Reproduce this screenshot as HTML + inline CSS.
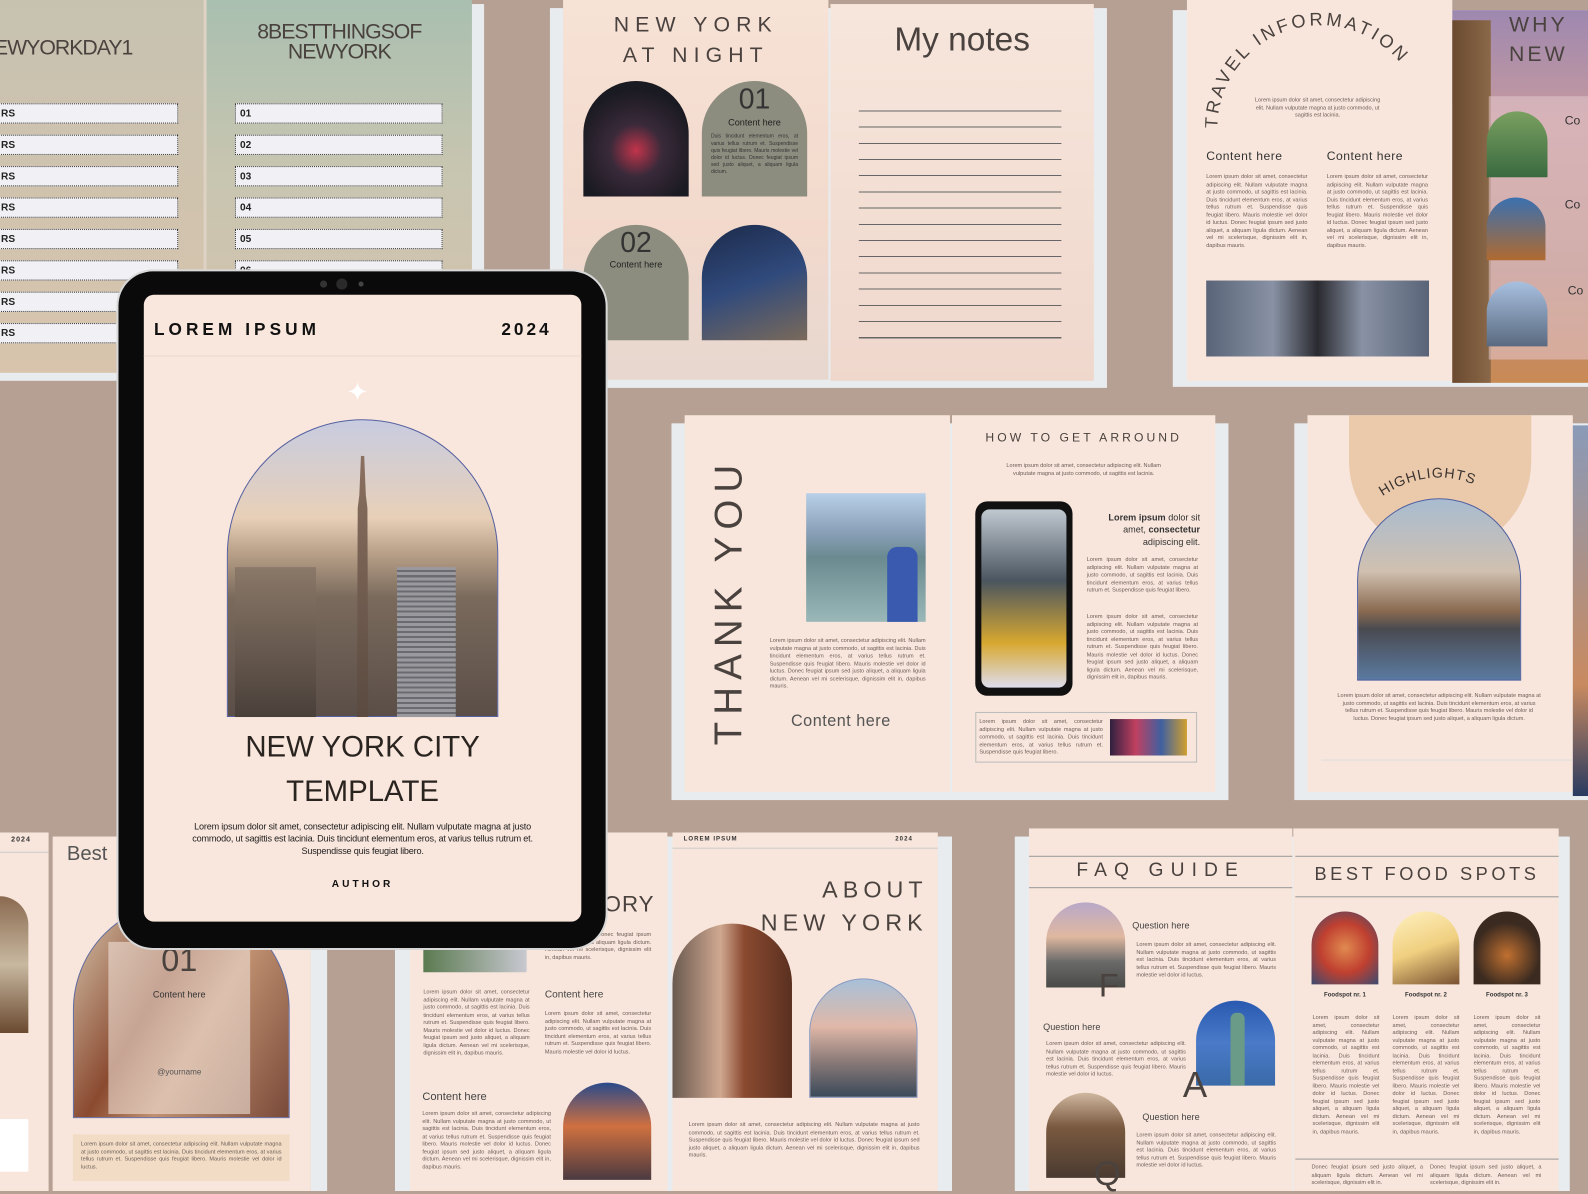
<!DOCTYPE html>
<html><head><meta charset="utf-8">
<style>
*{margin:0;padding:0;box-sizing:border-box}
html,body{width:1588px;height:1191px;overflow:hidden;background:#b5a093}
#w{position:absolute;left:0;top:0;width:1568px;height:1176px;transform:scale(1.01276);transform-origin:0 0;font-family:"Liberation Sans",sans-serif;color:#333}
.a{position:absolute}
.pg{position:absolute;background:#f8e6dc}
.sh{position:absolute;background:#e9ecef}
.arch{position:absolute;border-radius:999px 999px 0 0;overflow:hidden}
.t{position:absolute;font-size:5.5px;line-height:7.5px;color:#6a5c55;text-align:justify}
.h{position:absolute;font-weight:300;color:#4a423e;letter-spacing:4px;white-space:nowrap}
.box{position:absolute;height:20px;background:#f1f0f4;border:1.5px dotted #333;font:bold 10px "Liberation Sans";padding:4px 4px;color:#222}
</style></head><body><div id="w">

<!-- TOP LEFT SPREAD -->
<div class="sh" style="left:0;top:4px;width:478px;height:372px"></div>
<div class="a" style="left:0;top:0;width:466px;height:368px;background:linear-gradient(180deg,#a9bfb0 0%,#c7c5b0 45%,#d6c3ad 100%)"></div>
<div class="a" style="left:0;top:0;width:202px;height:368px;background:linear-gradient(180deg,#c7c2b0,#d8c4ad)"></div>
<div class="a" style="left:201px;top:0;width:3px;height:368px;background:#ddd2c4"></div>
<div class="h" style="left:-6px;top:36px;font-size:21px;letter-spacing:-1px">EWYORKDAY1</div>
<div class="h" style="left:230px;top:22px;width:210px;text-align:center;font-size:21px;line-height:20px;letter-spacing:-1px">8BESTTHINGSOF<br>NEWYORK</div>
<div class="box" style="left:-4px;top:102px;width:180px">RS</div>
<div class="box" style="left:-4px;top:133px;width:180px">RS</div>
<div class="box" style="left:-4px;top:164px;width:180px">RS</div>
<div class="box" style="left:-4px;top:195px;width:180px">RS</div>
<div class="box" style="left:-4px;top:226px;width:180px">RS</div>
<div class="box" style="left:-4px;top:257px;width:180px">RS</div>
<div class="box" style="left:-4px;top:288px;width:180px">RS</div>
<div class="box" style="left:-4px;top:319px;width:180px">RS</div>
<div class="box" style="left:232px;top:102px;width:205px">01</div>
<div class="box" style="left:232px;top:133px;width:205px">02</div>
<div class="box" style="left:232px;top:164px;width:205px">03</div>
<div class="box" style="left:232px;top:195px;width:205px">04</div>
<div class="box" style="left:232px;top:226px;width:205px">05</div>
<div class="box" style="left:232px;top:257px;width:205px">06</div>

<!-- TOP MIDDLE SPREAD -->
<div class="sh" style="left:543px;top:8px;width:550px;height:375px"></div>
<div class="pg" style="left:556px;top:0;width:262px;height:375px;background:linear-gradient(180deg,#f7e2d6 0%,#f2d9cc 60%,#e7d7cf 100%)"></div>
<div class="pg" style="left:820px;top:4px;width:260px;height:372px;background:linear-gradient(180deg,#f7e6dc,#efd7cc)"></div>
<div class="h" style="left:556px;top:10px;width:262px;text-align:center;font-size:21px;line-height:30px;letter-spacing:6px">NEW YORK<br>AT NIGHT</div>
<div class="arch" style="left:576px;top:80px;width:104px;height:114px;background:radial-gradient(circle at 50% 60%,#c2344b 0,#3a2a3a 30%,#1a1a22 70%)"></div>
<div class="arch" style="left:693px;top:80px;width:104px;height:114px;background:#8c8d7f"></div>
<div class="h" style="left:693px;top:82px;width:104px;text-align:center;font-size:28px;letter-spacing:0;color:#333">01</div>
<div class="a" style="left:693px;top:116px;width:104px;text-align:center;font-size:9px;color:#222">Content here</div>
<div class="t" style="left:702px;top:132px;width:86px;color:#333;font-size:5px;line-height:7px">Duis tincidunt elementum eros, at varius tellus rutrum et. Suspendisse quis feugiat libero. Mauris molestie vel dolor id luctus. Donec feugiat ipsum sed justo aliquet, a aliquam ligula dictum.</div>
<div class="arch" style="left:576px;top:222px;width:104px;height:114px;background:#8c8d7f"></div>
<div class="h" style="left:576px;top:224px;width:104px;text-align:center;font-size:28px;letter-spacing:0;color:#333">02</div>
<div class="a" style="left:576px;top:256px;width:104px;text-align:center;font-size:9px;color:#222">Content here</div>
<div class="arch" style="left:693px;top:222px;width:104px;height:114px;background:linear-gradient(160deg,#1c2a4a,#304a7c 50%,#7a6a5a)"></div>
<div class="h" style="left:820px;top:20px;width:260px;text-align:center;font-size:33px;letter-spacing:0">My notes</div>
<div class="a" style="left:848px;top:94px;width:200px;height:250px;background:repeating-linear-gradient(180deg,transparent 0,transparent 15px,#666 15px,#666 16px)"></div>

<!-- TOP RIGHT SPREAD -->
<div class="sh" style="left:1158px;top:10px;width:420px;height:372px"></div>
<div class="pg" style="left:1172px;top:0;width:262px;height:376px"></div>
<div class="a" style="left:1434px;top:10px;width:140px;height:368px;background:linear-gradient(180deg,#9e88b0 0%,#c69a9e 30%,#b98d7e 70%,#c98a54 100%)"></div>
<div class="a" style="left:1434px;top:20px;width:38px;height:358px;background:linear-gradient(90deg,#6a4a30,#8a6848)"></div>
<div class="a" style="left:1470px;top:95px;width:98px;height:260px;background:rgba(230,200,205,.55)"></div>
<div class="arch" style="left:1468px;top:110px;width:60px;height:65px;background:linear-gradient(#7aa060,#3a6a40)"></div>
<div class="arch" style="left:1468px;top:195px;width:58px;height:62px;background:linear-gradient(#3a70b0,#b06a30)"></div>
<div class="arch" style="left:1468px;top:278px;width:60px;height:64px;background:linear-gradient(#a8c0e0,#5a6a80)"></div>
<div class="h" style="left:1490px;top:10px;font-size:21px;letter-spacing:3px;line-height:29px">WHY<br>NEW</div>
<div class="a" style="left:1545px;top:112px;font-size:12px;color:#333">Co</div>
<div class="a" style="left:1545px;top:195px;font-size:12px;color:#333">Co</div>
<div class="a" style="left:1548px;top:280px;font-size:12px;color:#333">Co</div>
<svg class="a" style="left:1190px;top:5px" width="230" height="130" viewBox="0 0 230 130"><defs><path id="arc" d="M12,122 A102,102 0 0 1 216,122"/></defs><text font-family="Liberation Sans" font-size="18" fill="#4a423e" letter-spacing="3"><textPath href="#arc">TRAVEL INFORMATION</textPath></text></svg>
<div class="t" style="left:1236px;top:96px;width:130px;text-align:center">Lorem ipsum dolor sit amet, consectetur adipiscing elit. Nullam vulputate magna at justo commodo, ut sagittis est lacinia.</div>
<div class="a" style="left:1191px;top:147px;font-size:12px;color:#333;letter-spacing:.5px">Content here</div>
<div class="a" style="left:1310px;top:147px;font-size:12px;color:#333;letter-spacing:.5px">Content here</div>
<div class="t" style="left:1191px;top:172px;width:100px">Lorem ipsum dolor sit amet, consectetur adipiscing elit. Nullam vulputate magna at justo commodo, ut sagittis est lacinia. Duis tincidunt elementum eros, at varius tellus rutrum et. Suspendisse quis feugiat libero. Mauris molestie vel dolor id luctus. Donec feugiat ipsum sed justo aliquet, a aliquam ligula dictum. Aenean vel mi scelerisque, dignissim elit in, dapibus mauris.</div>
<div class="t" style="left:1310px;top:172px;width:100px">Lorem ipsum dolor sit amet, consectetur adipiscing elit. Nullam vulputate magna at justo commodo, ut sagittis est lacinia. Duis tincidunt elementum eros, at varius tellus rutrum et. Suspendisse quis feugiat libero. Mauris molestie vel dolor id luctus. Donec feugiat ipsum sed justo aliquet, a aliquam ligula dictum. Aenean vel mi scelerisque, dignissim elit in, dapibus mauris.</div>
<div class="a" style="left:1191px;top:277px;width:220px;height:75px;background:linear-gradient(90deg,#5a6478,#8892a4 30%,#2a2a30 50%,#8892a4 70%,#5a6478)"></div>

<!-- MIDDLE SPREAD -->
<div class="sh" style="left:663px;top:418px;width:550px;height:372px"></div>
<div class="pg" style="left:676px;top:410px;width:262px;height:372px"></div>
<div class="pg" style="left:940px;top:410px;width:260px;height:372px"></div>
<div class="h" style="left:570px;top:572px;width:300px;text-align:center;font-size:38px;letter-spacing:7px;transform:rotate(-90deg);line-height:44px">THANK YOU</div>
<div class="a" style="left:796px;top:487px;width:118px;height:127px;background:linear-gradient(180deg,#b8d0e8 0,#8aa0b8 30%,#6a8a90 50%,#9ab8b8 100%)"></div>
<div class="a" style="left:876px;top:540px;width:30px;height:74px;background:#3a5ab0;border-radius:10px 10px 0 0"></div>
<div class="t" style="left:760px;top:630px;width:154px">Lorem ipsum dolor sit amet, consectetur adipiscing elit. Nullam vulputate magna at justo commodo, ut sagittis est lacinia. Duis tincidunt elementum eros, at varius tellus rutrum et. Suspendisse quis feugiat libero. Mauris molestie vel dolor id luctus. Donec feugiat ipsum sed justo aliquet, a aliquam ligula dictum. Aenean vel mi scelerisque, dignissim elit in, dapibus mauris.</div>
<div class="a" style="left:781px;top:704px;font-size:16px;color:#555;letter-spacing:.5px">Content here</div>
<div class="h" style="left:940px;top:425px;width:260px;text-align:center;font-size:12px;letter-spacing:3px">HOW TO GET ARROUND</div>
<div class="t" style="left:985px;top:457px;width:170px;text-align:center">Lorem ipsum dolor sit amet, consectetur adipiscing elit. Nullam vulputate magna at justo commodo, ut sagittis est lacinia.</div>
<div class="a" style="left:963px;top:495px;width:96px;height:192px;background:#111;border-radius:12px"></div>
<div class="a" style="left:969px;top:503px;width:84px;height:176px;border-radius:8px;background:linear-gradient(180deg,#c0c8d0,#4a5560 40%,#d8a830 75%,#dde 100%)"></div>
<div class="a" style="left:1070px;top:505px;width:115px;text-align:right;font-size:9px;line-height:12px;color:#333"><b>Lorem ipsum</b> dolor sit amet, <b>consectetur</b> adipiscing elit.</div>
<div class="t" style="left:1073px;top:550px;width:110px">Lorem ipsum dolor sit amet, consectetur adipiscing elit. Nullam vulputate magna at justo commodo, ut sagittis est lacinia. Duis tincidunt elementum eros, at varius tellus rutrum et. Suspendisse quis feugiat libero.</div>
<div class="t" style="left:1073px;top:606px;width:110px">Lorem ipsum dolor sit amet, consectetur adipiscing elit. Nullam vulputate magna at justo commodo, ut sagittis est lacinia. Duis tincidunt elementum eros, at varius tellus rutrum et. Suspendisse quis feugiat libero. Mauris molestie vel dolor id luctus. Donec feugiat ipsum sed justo aliquet, a aliquam ligula dictum. Aenean vel mi scelerisque, dignissim elit in, dapibus mauris.</div>
<div class="a" style="left:963px;top:703px;width:219px;height:50px;border:1px solid #bbb"></div>
<div class="t" style="left:967px;top:710px;width:122px">Lorem ipsum dolor sit amet, consectetur adipiscing elit. Nullam vulputate magna at justo commodo, ut sagittis est lacinia. Duis tincidunt elementum eros, at varius tellus rutrum et. Suspendisse quis feugiat libero.</div>
<div class="a" style="left:1096px;top:710px;width:76px;height:36px;background:linear-gradient(90deg,#302040,#c04060,#4060a0,#d0a030)"></div>

<!-- RIGHT MIDDLE -->
<div class="sh" style="left:1278px;top:418px;width:290px;height:372px"></div>
<div class="pg" style="left:1291px;top:410px;width:262px;height:372px"></div>
<div class="a" style="left:1553px;top:420px;width:15px;height:366px;background:linear-gradient(180deg,#8a9ab8,#c88a60 70%,#2a3a60)"></div>
<div class="a" style="left:1332px;top:410px;width:180px;height:135px;background:#ebc9ab;border-radius:0 0 90px 90px"></div>
<div class="arch" style="left:1340px;top:492px;width:162px;height:180px;border:1px solid #5060a0;background:linear-gradient(180deg,#a8bcd0 0,#d0c0b0 40%,#8a6a50 62%,#4a4a50 72%,#5a7aa0 100%)"></div>
<svg class="a" style="left:1360px;top:448px" width="120" height="50"><defs><path id="a2" d="M5,42 Q60,5 118,42"/></defs><text font-family="Liberation Sans" font-size="14" fill="#3a3330" letter-spacing="1"><textPath href="#a2">HIGHLIGHTS</textPath></text></svg>
<div class="t" style="left:1320px;top:684px;width:202px;text-align:center">Lorem ipsum dolor sit amet, consectetur adipiscing elit. Nullam vulputate magna at justo commodo, ut sagittis est lacinia. Duis tincidunt elementum eros, at varius tellus rutrum et. Suspendisse quis feugiat libero. Mauris molestie vel dolor id luctus. Donec feugiat ipsum sed justo aliquet, a aliquam ligula dictum.</div>
<div class="a" style="left:1305px;top:750px;width:248px;border-top:1px solid #ddd"></div>

<!-- BOTTOM LEFT -->
<div class="pg" style="left:0;top:822px;width:48px;height:354px"></div>
<div class="a" style="left:11px;top:826px;font:bold 7px 'Liberation Sans';letter-spacing:1px">2024</div>
<div class="a" style="left:0;top:841px;width:48px;border-top:1px solid #ccc"></div>
<div class="a" style="left:0;top:885px;width:28px;height:135px;background:linear-gradient(#8a6a50,#c8b8a0,#6a4a30);border-radius:0 30px 0 0"></div>
<div class="a" style="left:0;top:1105px;width:28px;height:52px;background:#fff"></div>
<div class="pg" style="left:52px;top:826px;width:255px;height:350px"></div>
<div class="a" style="left:66px;top:832px;font-size:20px;color:#555">Best</div>
<div class="arch" style="left:72px;top:890px;width:214px;height:214px;border:1px solid #606aa0;background:linear-gradient(120deg,#d8c8b0,#8a4a30 40%,#c09070 60%,#7a4a3a)"></div>
<div class="a" style="left:107px;top:930px;width:140px;height:170px;background:rgba(240,225,215,.6)"></div>
<div class="h" style="left:107px;top:930px;width:140px;text-align:center;font-size:32px;letter-spacing:0">01</div>
<div class="a" style="left:107px;top:977px;width:140px;text-align:center;font-size:9px;color:#333">Content here</div>
<div class="a" style="left:107px;top:1054px;width:140px;text-align:center;font-size:8px;color:#555">@yourname</div>
<div class="a" style="left:72px;top:1120px;width:214px;height:46px;background:#f2dcc6"></div>
<div class="t" style="left:80px;top:1127px;width:198px">Lorem ipsum dolor sit amet, consectetur adipiscing elit. Nullam vulputate magna at justo commodo, ut sagittis est lacinia. Duis tincidunt elementum eros, at varius tellus rutrum et. Suspendisse quis feugiat libero. Mauris molestie vel dolor id luctus.</div>
<div class="sh" style="left:307px;top:826px;width:16px;height:350px"></div>

<!-- BOTTOM MIDDLE -->
<div class="sh" style="left:390px;top:826px;width:550px;height:350px"></div>
<div class="pg" style="left:405px;top:822px;width:254px;height:354px"></div>
<div class="pg" style="left:664px;top:822px;width:262px;height:354px"></div>
<div class="h" style="left:596px;top:880px;font-size:22px;letter-spacing:1px">ORY</div>
<div class="a" style="left:418px;top:935px;width:102px;height:25px;background:linear-gradient(90deg,#5a7a50,#c8c8d0)"></div>
<div class="t" style="left:538px;top:920px;width:105px">vel dolor id luctus. Donec feugiat ipsum sed justo aliquet, a aliquam ligula dictum. Aenean vel mi scelerisque, dignissim elit in, dapibus mauris.</div>
<div class="t" style="left:418px;top:977px;width:105px">Lorem ipsum dolor sit amet, consectetur adipiscing elit. Nullam vulputate magna at justo commodo, ut sagittis est lacinia. Duis tincidunt elementum eros, at varius tellus rutrum et. Suspendisse quis feugiat libero. Mauris molestie vel dolor id luctus. Donec feugiat ipsum sed justo aliquet, a aliquam ligula dictum. Aenean vel mi scelerisque, dignissim elit in, dapibus mauris.</div>
<div class="a" style="left:538px;top:977px;font-size:10px;color:#444">Content here</div>
<div class="t" style="left:538px;top:998px;width:105px">Lorem ipsum dolor sit amet, consectetur adipiscing elit. Nullam vulputate magna at justo commodo, ut sagittis est lacinia. Duis tincidunt elementum eros, at varius tellus rutrum et. Suspendisse quis feugiat libero. Mauris molestie vel dolor id luctus.</div>
<div class="a" style="left:417px;top:1077px;font-size:11px;color:#444">Content here</div>
<div class="t" style="left:417px;top:1097px;width:127px">Lorem ipsum dolor sit amet, consectetur adipiscing elit. Nullam vulputate magna at justo commodo, ut sagittis est lacinia. Duis tincidunt elementum eros, at varius tellus rutrum et. Suspendisse quis feugiat libero. Mauris molestie vel dolor id luctus. Donec feugiat ipsum sed justo aliquet, a aliquam ligula dictum. Aenean vel mi scelerisque, dignissim elit in, dapibus mauris.</div>
<div class="arch" style="left:556px;top:1069px;width:87px;height:96px;background:linear-gradient(180deg,#2a4a8a,#d07040 45%,#4a3a40)"></div>
<div class="a" style="left:675px;top:826px;font:bold 6px 'Liberation Sans';letter-spacing:1px">LOREM IPSUM</div>
<div class="a" style="left:884px;top:826px;font:bold 6px 'Liberation Sans';letter-spacing:1px">2024</div>
<div class="a" style="left:664px;top:837px;width:262px;border-top:1px solid #ccc"></div>
<div class="h" style="left:680px;top:862px;width:236px;text-align:right;font-size:23px;line-height:33px;letter-spacing:5px">ABOUT<br>NEW YORK</div>
<div class="arch" style="left:664px;top:912px;width:118px;height:172px;background:linear-gradient(90deg,#6a5a50,#d0a890 40%,#8a4a30 60%,#5a3020)"></div>
<div class="arch" style="left:799px;top:966px;width:107px;height:118px;border:1px solid #8a9ac0;background:linear-gradient(180deg,#a8c0d8,#e0b8a8 40%,#8a7a78 70%,#3a4a5a)"></div>
<div class="t" style="left:680px;top:1108px;width:228px">Lorem ipsum dolor sit amet, consectetur adipiscing elit. Nullam vulputate magna at justo commodo, ut sagittis est lacinia. Duis tincidunt elementum eros, at varius tellus rutrum et. Suspendisse quis feugiat libero. Mauris molestie vel dolor id luctus. Donec feugiat ipsum sed justo aliquet, a aliquam ligula dictum. Aenean vel mi scelerisque, dignissim elit in, dapibus mauris.</div>

<!-- BOTTOM RIGHT -->
<div class="sh" style="left:1002px;top:826px;width:548px;height:350px"></div>
<div class="pg" style="left:1016px;top:818px;width:260px;height:358px"></div>
<div class="pg" style="left:1277px;top:818px;width:262px;height:358px"></div>
<div class="a" style="left:1016px;top:845px;width:260px;border-top:1px solid #999"></div>
<div class="a" style="left:1016px;top:876px;width:260px;border-top:1px solid #999"></div>
<div class="a" style="left:1279px;top:845px;width:260px;border-top:1px solid #999"></div>
<div class="a" style="left:1279px;top:885px;width:260px;border-top:1px solid #999"></div>
<div class="h" style="left:1016px;top:849px;width:260px;text-align:center;font-size:19px;letter-spacing:7px">FAQ GUIDE</div>
<div class="h" style="left:1279px;top:853px;width:260px;text-align:center;font-size:18px;letter-spacing:3.5px">BEST FOOD SPOTS</div>
<div class="arch" style="left:1033px;top:891px;width:78px;height:84px;background:linear-gradient(180deg,#b8a8c8,#e0b8a0 40%,#6a6a6a 70%,#4a4a48)"></div>
<div class="h" style="left:1085px;top:955px;font-size:32px;letter-spacing:0">F</div>
<div class="a" style="left:1118px;top:909px;font-size:9px;color:#444">Question here</div>
<div class="t" style="left:1122px;top:930px;width:138px">Lorem ipsum dolor sit amet, consectetur adipiscing elit. Nullam vulputate magna at justo commodo, ut sagittis est lacinia. Duis tincidunt elementum eros, at varius tellus rutrum et. Suspendisse quis feugiat libero. Mauris molestie vel dolor id luctus.</div>
<div class="arch" style="left:1181px;top:988px;width:78px;height:84px;background:linear-gradient(180deg,#2a5ab0,#4a7ac8 50%,#3a6aa8)"></div>
<div class="a" style="left:1215px;top:1000px;width:14px;height:72px;background:#6a9a88;border-radius:6px 6px 0 0"></div>
<div class="h" style="left:1168px;top:1050px;font-size:36px;letter-spacing:0">A</div>
<div class="a" style="left:1030px;top:1009px;font-size:9px;color:#444">Question here</div>
<div class="t" style="left:1033px;top:1028px;width:138px">Lorem ipsum dolor sit amet, consectetur adipiscing elit. Nullam vulputate magna at justo commodo, ut sagittis est lacinia. Duis tincidunt elementum eros, at varius tellus rutrum et. Suspendisse quis feugiat libero. Mauris molestie vel dolor id luctus.</div>
<div class="arch" style="left:1033px;top:1079px;width:78px;height:84px;background:linear-gradient(180deg,#d0b8a0,#7a5a40 40%,#4a3a30)"></div>
<div class="h" style="left:1080px;top:1140px;font-size:34px;letter-spacing:0">Q</div>
<div class="a" style="left:1128px;top:1098px;font-size:9px;color:#444">Question here</div>
<div class="t" style="left:1122px;top:1118px;width:138px">Lorem ipsum dolor sit amet, consectetur adipiscing elit. Nullam vulputate magna at justo commodo, ut sagittis est lacinia. Duis tincidunt elementum eros, at varius tellus rutrum et. Suspendisse quis feugiat libero. Mauris molestie vel dolor id luctus.</div>
<div class="arch" style="left:1295px;top:900px;width:66px;height:72px;background:radial-gradient(circle,#e08a50,#c04030 50%,#3a4a70)"></div>
<div class="arch" style="left:1375px;top:900px;width:66px;height:72px;background:linear-gradient(160deg,#fff0c0,#f0d080 50%,#7a5030)"></div>
<div class="arch" style="left:1455px;top:900px;width:66px;height:72px;background:radial-gradient(circle at 50% 60%,#c07030,#3a2a20 60%)"></div>
<div class="a" style="left:1295px;top:980px;width:66px;text-align:center;font:bold 6px 'Liberation Sans'">Foodspot nr. 1</div>
<div class="a" style="left:1375px;top:980px;width:66px;text-align:center;font:bold 6px 'Liberation Sans'">Foodspot nr. 2</div>
<div class="a" style="left:1455px;top:980px;width:66px;text-align:center;font:bold 6px 'Liberation Sans'">Foodspot nr. 3</div>
<div class="t" style="left:1296px;top:1002px;width:66px">Lorem ipsum dolor sit amet, consectetur adipiscing elit. Nullam vulputate magna at justo commodo, ut sagittis est lacinia. Duis tincidunt elementum eros, at varius tellus rutrum et. Suspendisse quis feugiat libero. Mauris molestie vel dolor id luctus. Donec feugiat ipsum sed justo aliquet, a aliquam ligula dictum. Aenean vel mi scelerisque, dignissim elit in, dapibus mauris.</div>
<div class="t" style="left:1375px;top:1002px;width:66px">Lorem ipsum dolor sit amet, consectetur adipiscing elit. Nullam vulputate magna at justo commodo, ut sagittis est lacinia. Duis tincidunt elementum eros, at varius tellus rutrum et. Suspendisse quis feugiat libero. Mauris molestie vel dolor id luctus. Donec feugiat ipsum sed justo aliquet, a aliquam ligula dictum. Aenean vel mi scelerisque, dignissim elit in, dapibus mauris.</div>
<div class="t" style="left:1455px;top:1002px;width:66px">Lorem ipsum dolor sit amet, consectetur adipiscing elit. Nullam vulputate magna at justo commodo, ut sagittis est lacinia. Duis tincidunt elementum eros, at varius tellus rutrum et. Suspendisse quis feugiat libero. Mauris molestie vel dolor id luctus. Donec feugiat ipsum sed justo aliquet, a aliquam ligula dictum. Aenean vel mi scelerisque, dignissim elit in, dapibus mauris.</div>
<div class="a" style="left:1279px;top:1144px;width:260px;border-top:1px solid #999"></div>
<div class="t" style="left:1295px;top:1150px;width:110px">Donec feugiat ipsum sed justo aliquet, a aliquam ligula dictum. Aenean vel mi scelerisque, dignissim elit in.</div>
<div class="t" style="left:1412px;top:1150px;width:110px">Donec feugiat ipsum sed justo aliquet, a aliquam ligula dictum. Aenean vel mi scelerisque, dignissim elit in.</div>

<!-- TABLET -->
<div class="a" style="left:117px;top:268px;width:481px;height:668px;background:#0a0a0a;border-radius:34px;box-shadow:0 0 0 2px #d8d8d8"></div>
<div class="a" style="left:316px;top:277px;width:7px;height:7px;border-radius:50%;background:#333"></div>
<div class="a" style="left:332px;top:275px;width:11px;height:11px;border-radius:50%;background:#2a2a2a"></div>
<div class="a" style="left:354px;top:278px;width:5px;height:5px;border-radius:50%;background:#444"></div>
<div class="pg" style="left:142px;top:291px;width:432px;height:619px;border-radius:10px;background:#f9e6dc"></div>
<div class="a" style="left:152px;top:316px;font:bold 17px 'Liberation Sans';letter-spacing:4px;color:#111">LOREM IPSUM</div>
<div class="a" style="left:495px;top:316px;font:bold 17px 'Liberation Sans';letter-spacing:3px;color:#111">2024</div>
<div class="a" style="left:142px;top:351px;width:432px;border-top:1px solid #f0d8cc"></div>
<div class="a" style="left:342px;top:372px;font-size:26px;color:#fff">✦</div>
<div class="arch" style="left:224px;top:414px;width:268px;height:294px;border:1.5px solid #5560a0;background:linear-gradient(180deg,#c8cce0 0%,#e8d0b8 33%,#b8a088 45%,#7a6a5c 60%,#5a4e48 100%)"></div>
<div class="a" style="left:350px;top:450px;width:16px;height:258px;background:linear-gradient(180deg,#8a7060,#5a4a40);clip-path:polygon(40% 0,60% 0,70% 15%,80% 20%,85% 100%,15% 100%,20% 20%,30% 15%)"></div>
<div class="a" style="left:392px;top:560px;width:58px;height:148px;background:repeating-linear-gradient(180deg,#9a9a9e 0,#9a9a9e 3px,#6a6a70 3px,#6a6a70 5px)"></div>
<div class="a" style="left:232px;top:560px;width:80px;height:148px;background:linear-gradient(180deg,#8a7868,#4a403a)"></div>
<div class="h" style="left:142px;top:716px;width:432px;text-align:center;font-size:29px;line-height:44px;letter-spacing:0;color:#2a2420">NEW YORK CITY<br>TEMPLATE</div>
<div class="a" style="left:172px;top:810px;width:372px;text-align:center;font-size:9px;line-height:12px;color:#222;letter-spacing:-.2px">Lorem ipsum dolor sit amet, consectetur adipiscing elit. Nullam vulputate magna at justo commodo, ut sagittis est lacinia. Duis tincidunt elementum eros, at varius tellus rutrum et. Suspendisse quis feugiat libero.</div>
<div class="a" style="left:142px;top:868px;width:432px;text-align:center;font:bold 10px 'Liberation Sans';letter-spacing:3px;color:#111">AUTHOR</div>

</div></body></html>
